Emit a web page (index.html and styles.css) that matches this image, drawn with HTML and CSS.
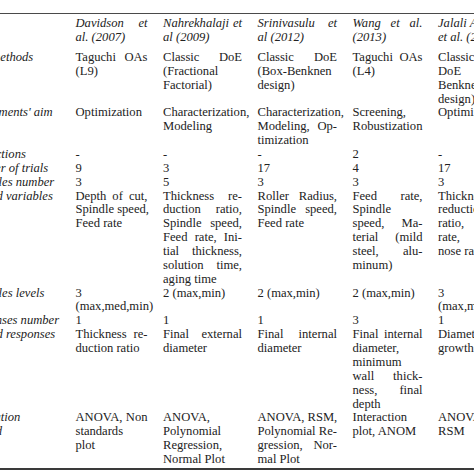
FILE: index.html
```html
<!DOCTYPE html>
<html>
<head>
<meta charset="utf-8">
<link rel="stylesheet" href="styles.css">
</head>
<body>
<div class="frame">
  <div class="table">
    <div class="c h lab"></div>
    <div class="c h it"><div class="j"><span>Davidson</span><span>et</span></div><div>al. (2007)</div></div>
    <div class="c h it"><div class="j"><span>Nahrekhalaji</span><span>et</span></div><div>al (2009)</div></div>
    <div class="c h it"><div class="j"><span>Srinivasulu</span><span>et</span></div><div>al (2012)</div></div>
    <div class="c h it"><div class="j"><span>Wang</span><span>et</span><span>al.</span></div><div>(2013)</div></div>
    <div class="c h it"><div class="j"><span>Jalali</span><span>Aghchai</span></div><div>et al. (2012)</div></div>

    <div class="c lab">DoE methods</div>
    <div class="c"><div class="j"><span>Taguchi</span><span>OAs</span></div><div>(L9)</div></div>
    <div class="c"><div class="j"><span>Classic</span><span>DoE</span></div><div>(Fractional</div><div>Factorial)</div></div>
    <div class="c"><div class="j"><span>Classic</span><span>DoE</span></div><div>(Box-Benknen</div><div>design)</div></div>
    <div class="c"><div class="j"><span>Taguchi</span><span>OAs</span></div><div>(L4)</div></div>
    <div class="c"><div>Classic</div><div class="j"><span>DoE</span><span>(Box-</span></div><div>Benknen</div><div>design)</div></div>

    <div class="c lab">Experiments' aim</div>
    <div class="c"><div>Optimization</div></div>
    <div class="c"><div>Characterization,</div><div>Modeling</div></div>
    <div class="c"><div>Characterization,</div><div class="j"><span>Modeling,</span><span>Op-</span></div><div>timization</div></div>
    <div class="c"><div>Screening,</div><div>Robustization</div></div>
    <div class="c"><div>Optimization</div></div>

    <div class="c lab">Interactions</div>
    <div class="c">-</div>
    <div class="c">-</div>
    <div class="c">-</div>
    <div class="c">2</div>
    <div class="c">-</div>

    <div class="c lab">Number of trials</div>
    <div class="c">9</div>
    <div class="c">3</div>
    <div class="c">17</div>
    <div class="c">4</div>
    <div class="c">17</div>

    <div class="c lab">Variables number</div>
    <div class="c">3</div>
    <div class="c">5</div>
    <div class="c">3</div>
    <div class="c">3</div>
    <div class="c">3</div>

    <div class="c lab">Studied variables</div>
    <div class="c"><div class="j"><span>Depth</span><span>of</span><span>cut,</span></div><div>Spindle speed,</div><div>Feed rate</div></div>
    <div class="c"><div class="j"><span>Thickness</span><span>re-</span></div><div class="j"><span>duction</span><span>ratio,</span></div><div class="j"><span>Spindle</span><span>speed,</span></div><div class="j"><span>Feed</span><span>rate,</span><span>Ini-</span></div><div class="j"><span>tial</span><span>thickness,</span></div><div class="j"><span>solution</span><span>time,</span></div><div>aging time</div></div>
    <div class="c"><div class="j"><span>Roller</span><span>Radius,</span></div><div class="j"><span>Spindle</span><span>speed,</span></div><div>Feed rate</div></div>
    <div class="c"><div class="j"><span>Feed</span><span>rate,</span></div><div>Spindle</div><div class="j"><span>speed,</span><span>Ma-</span></div><div class="j"><span>terial</span><span>(mild</span></div><div class="j"><span>steel,</span><span>alu-</span></div><div>minum)</div></div>
    <div class="c"><div>Thickness</div><div>reduction</div><div class="j"><span>ratio,</span><span>feed</span></div><div class="j"><span>rate,</span><span>roller</span></div><div>nose radius</div></div>

    <div class="c lab">Variables levels</div>
    <div class="c"><div>3</div><div>(max,med,min)</div></div>
    <div class="c">2 (max,min)</div>
    <div class="c">2 (max,min)</div>
    <div class="c">2 (max,min)</div>
    <div class="c"><div>3</div><div>(max,med,min)</div></div>

    <div class="c lab">Responses number</div>
    <div class="c">1</div>
    <div class="c">1</div>
    <div class="c">1</div>
    <div class="c">3</div>
    <div class="c">1</div>

    <div class="c lab">Studied responses</div>
    <div class="c"><div class="j"><span>Thickness</span><span>re-</span></div><div>duction ratio</div></div>
    <div class="c"><div class="j"><span>Final</span><span>external</span></div><div>diameter</div></div>
    <div class="c"><div class="j"><span>Final</span><span>internal</span></div><div>diameter</div></div>
    <div class="c"><div class="j"><span>Final</span><span>internal</span></div><div>diameter,</div><div>minimum</div><div class="j"><span>wall</span><span>thick-</span></div><div class="j"><span>ness,</span><span>final</span></div><div>depth</div></div>
    <div class="c"><div>Diameter</div><div>growth</div></div>

    <div class="c lab"><div>Evaluation</div><div>method</div></div>
    <div class="c"><div class="j"><span>ANOVA,</span><span>Non</span></div><div>standards</div><div>plot</div></div>
    <div class="c"><div>ANOVA,</div><div>Polynomial</div><div>Regression,</div><div>Normal Plot</div></div>
    <div class="c"><div class="j"><span>ANOVA,</span><span>RSM,</span></div><div class="j"><span>Polynomial</span><span>Re-</span></div><div class="j"><span>gression,</span><span>Nor-</span></div><div>mal Plot</div></div>
    <div class="c"><div>Interaction</div><div>plot, ANOM</div></div>
    <div class="c"><div>ANOVA,</div><div>RSM</div></div>
  </div>
</div>
</body>
</html>
```

FILE: styles.css
```css
html, body {
  margin: 0;
  padding: 0;
  background: #ffffff;
}

.frame {
  width: 474px;
  height: 474px;
  overflow: hidden;
  padding-top: 13px;
  box-sizing: border-box;
}

.table {
  display: grid;
  grid-template-columns: 95px 72px 79px 79.5px 70px 72px;
  column-gap: 15.5px;
  width: max-content;
  margin-left: -35px;
  padding-bottom: 1px;
  border-top: 1.5px solid #4a4a4a;
  border-bottom: 2px solid #3a3a3a;
  font-family: "Liberation Serif", "Times New Roman", serif;
  font-size: 12.6px;
  line-height: 13.86px;
  color: #222222;
}

.c {
  white-space: nowrap;
}

.c .j {
  display: flex;
  justify-content: space-between;
  column-gap: 3px;
}

.h {
  padding-top: 3px;
  padding-bottom: 6.3px;
}

.it,
.lab {
  font-style: italic;
}
```
